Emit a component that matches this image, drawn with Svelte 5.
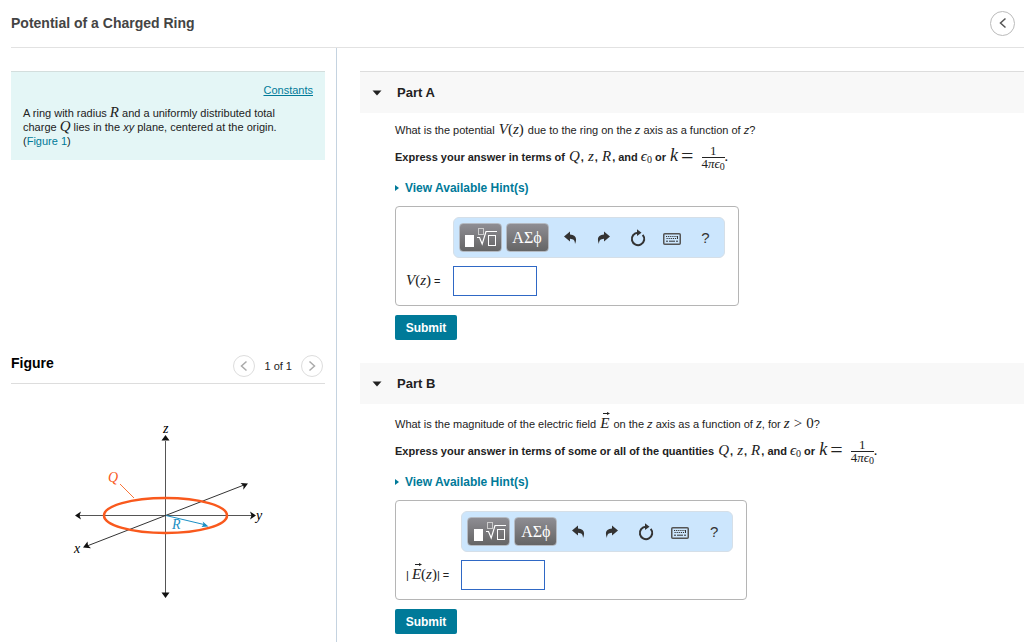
<script lang="ts">
	const parts = [
		{ id: "a", name: "Part A", given: "", label: "V" },
		{ id: "b", name: "Part B", given: "some or all of the quantities ", label: "E" },
	];

	let open = $state<Record<string, boolean>>({ a: true, b: true });
	let answers = $state<Record<string, string>>({ a: "", b: "" });
</script>

{#snippet chevron(dir: string)}
	<svg width="10" height="12" viewBox="0 0 10 12" fill="none" stroke="currentColor" aria-hidden="true">
		<path d={dir === "left" ? "M7.5 1.5 2.5 6l5 4.5" : "M2.5 1.5 7.5 6l-5 4.5"} stroke-width="1.5" />
	</svg>
{/snippet}

{#snippet vec()}
	<span class="vec"><i class="m">E</i><svg width="7" height="5" viewBox="0 0 7 5" aria-hidden="true"><path d="M0 2.500h5" stroke="#222" /><path d="M4 1 7 2.500 4 4z" fill="#222" /></svg></span>
{/snippet}

{#snippet toolbar()}
	<div class="toolbar">
		<button class="key" title="Templates">
			<svg width="34" height="22" viewBox="0 0 34 22" fill="none" stroke="#fff" aria-hidden="true">
				<rect x="2" y="8" width="9" height="12" fill="#fff" stroke="none" />
				<rect x="15.500" y="1.500" width="5" height="6" stroke="#ccc" />
				<path d="M14 10.500h2.500l2.700 6.500L23 4.500h11" stroke-width="1.200" />
				<rect x="25.500" y="8.500" width="7" height="10" />
			</svg>
		</button>
		<button class="key" title="Symbols">ΑΣϕ</button>
		<button class="tool" title="Undo">
			<svg width="14" height="14" viewBox="0 0 14 14" aria-hidden="true">
				<path d="M1 5.500 7 .5v3c5.500.2 7.500 4 5 9.500C12 9.500 10.500 8 7 7.800V10.500z" fill="#333" />
			</svg>
		</button>
		<button class="tool" title="Redo">
			<svg width="14" height="14" viewBox="0 0 14 14" aria-hidden="true">
				<path d="M13 5.500 7 .5v3C1.500 3.700-.5 7.500 2 13 2 9.500 3.500 8 7 7.800V10.500z" fill="#333" />
			</svg>
		</button>
		<button class="tool" title="Reset">
			<svg width="16" height="18" viewBox="0 0 16 18" aria-hidden="true">
				<path d="M8 3.700A6.200 6.200 0 1 0 12.700 5.800" fill="none" stroke="#333" stroke-width="2" />
				<path d="M7 .3 11.500 3.700 7 7z" fill="#333" />
			</svg>
		</button>
		<button class="tool" title="Keyboard shortcuts">
			<svg class="keyboard" width="18" height="12" viewBox="0 0 18 12" fill="none" stroke="#333" aria-hidden="true">
				<rect x=".75" y=".75" width="16.500" height="10.500" rx="1" stroke="#555" stroke-width="1.500" />
				<path d="M3 3.500h12M3.500 5.500h10" stroke-dasharray="1.200 .9" />
				<path d="M3 8.200h2M6 8.200h6M13 8.200h2M14.500 3v3" />
			</svg>
		</button>
		<button class="tool help" title="Help">?</button>
	</div>
{/snippet}

<div class="page">
	<header>
		<h1>Potential of a Charged Ring</h1>
		<button class="round dark" title="Collapse">{@render chevron("left")}</button>
	</header>

	<div class="columns">
		<aside>
			<section class="intro">
				<a class="constants" href="#constants">Constants</a>
				<p>
					A ring with radius <i class="m">R</i> and a uniformly distributed total charge <i class="m">Q</i> lies in the <em>xy</em> plane, centered at the origin. (<a href="#figure">Figure 1</a>)
				</p>
			</section>

			<section class="figure" id="figure">
				<div class="figure-head">
					<h2>Figure</h2>
					<div class="pager">
						<button class="round" title="Previous">{@render chevron("left")}</button>
						<span>1 of 1</span>
						<button class="round" title="Next">{@render chevron("right")}</button>
					</div>
				</div>
				<svg class="diagram" width="200" height="190" viewBox="0 -10 200 190" role="img" aria-label="Charged ring in the xy plane">
					<g stroke="#333" fill="none">
						<path d="M100.500 17V169M14 91.500H187" stroke="#555" />
						<path d="M22 122 179 61" />
					</g>
					<g fill="#111">
						<path d="M100.500 11l4 5.500h-8zM100.500 174l4-5.500h-8z" />
						<path d="M10 91.500l6-4-1.500 4 1.500 4zM191 91.500l-6-4 1.500 4-1.500 4z" />
						<path d="M18 123.500l4.500-6 .5 4 3 2.800zM183 59.500l-7.500-.5 3 2.800-.2 4z" />
					</g>
					<path d="M55 60 69 74" stroke="#f9753a" />
					<ellipse cx="100.500" cy="91.500" rx="61.500" ry="17.500" fill="none" stroke="#f9591d" stroke-width="2.500" />
					<path d="M101 91.500 141 101" stroke="#1c8fc4" fill="none" />
					<path d="M143.500 102.500l-7 .5 2-2.500-.8-3z" fill="#1c8fc4" />
					<text x="98" y="9">z</text>
					<text x="191" y="96">y</text>
					<text x="9" y="129">x</text>
					<text x="43" y="58" fill="#f9591d">Q</text>
					<text x="107" y="105" fill="#1c8fc4">R</text>
				</svg>
			</section>
		</aside>

		<main>
			{#each parts as part (part.id)}
				<section class="part">
					<h3>
						<button class="part-toggle" aria-expanded={open[part.id]} onclick={() => (open[part.id] = !open[part.id])}>
							<svg width="10" height="6" viewBox="0 0 10 6" aria-hidden="true"><path d="M.5 .5h9L5 5.500z" fill="#222" /></svg>
							{part.name}
						</button>
					</h3>
					{#if open[part.id]}
						<div class="body">
							{#if part.id === "a"}
								<p class="question">
									What is the potential <span class="m wide"><i>V</i>(<i>z</i>)</span> due to the ring on the <em>z</em> axis as a function of <em>z</em>?
								</p>
							{:else}
								<p class="question tall">
									What is the magnitude of the electric field <span class="wide">{@render vec()}</span> on the <em>z</em> axis as a function of <i class="m">z</i>, for <i class="m">z</i> <span class="m wide">&gt;</span> <span class="m">0</span>?
								</p>
							{/if}
							<p class="express">
								Express your answer in terms of {part.given}<i class="m wide">Q</i>, <i class="m wide">z</i>, <i class="m wide">R</i>, and <i class="m">ϵ</i><sub class="m">0</sub> or <i class="m k">k</i>
								<span class="m eq">=</span>
								<span class="frac m"><span>1</span><span>4<i>πϵ</i><sub>0</sub></span></span>.
							</p>
							<button class="hints">
								<svg width="4" height="6" viewBox="0 0 4 6" aria-hidden="true"><path d="M0 0v6l4-3z" fill="currentColor" /></svg>
								View Available Hint(s)
							</button>
							<form onsubmit={(e) => e.preventDefault()}>
								<div class="answer">
									{@render toolbar()}
									<label for="answer-{part.id}">
										{#if part.label === "V"}
											<span class="m"><i>V</i>(<i>z</i>)</span> =
										{:else}
											<span>|</span> {@render vec()}<span class="m">(<i>z</i>)</span>| =
										{/if}
									</label>
									<input id="answer-{part.id}" type="text" bind:value={answers[part.id]} />
								</div>
								<button class="submit">Submit</button>
							</form>
						</div>
					{/if}
				</section>
			{/each}
		</main>
	</div>
</div>

<style>
	:global(body) {
		margin: 0;
		background: #fff;
		color: #222;
		font: 11px/14px "Liberation Sans", Arial, sans-serif;
	}

	h1, h2, h3, p {
		margin: 0;
	}

	button {
		font-family: inherit;
		padding: 0;
		border: none;
		background: none;
		color: inherit;
		cursor: pointer;
	}

	a {
		color: #007a99;
		text-decoration: none;
	}

	.page {
		min-height: 100vh;
		display: flex;
		flex-direction: column;
	}

	header {
		display: flex;
		align-items: center;
		justify-content: space-between;
		height: 46px;
		margin-left: 11px;
		padding: 0 9px 1px 0;
		border-bottom: 1px solid #e2e2e2;
	}

	h1 {
		font-size: 14px;
		color: #444;
	}

	.round {
		width: 22px;
		height: 22px;
		box-sizing: border-box;
		display: flex;
		align-items: center;
		justify-content: center;
		border: 1px solid #ddd;
		border-radius: 50%;
		color: #aaa;
	}

	.round.dark {
		width: 25px;
		height: 25px;
		border-color: #bbb;
		color: #555;
	}

	.columns {
		flex: 1;
		display: flex;
	}

	aside {
		flex: none;
		width: 314px;
		padding: 23px 11px 0;
		border-right: 1px solid #c5d3e0;
	}

	.intro {
		padding: 11px 12px 12px;
		border-top: 1px solid #d3dedd;
		background: #e4f6f6;
	}

	.intro p {
		padding-right: 20px;
	}

	.constants {
		display: block;
		width: fit-content;
		margin: 0 0 9px auto;
		text-decoration: underline;
	}

	.m {
		font-family: "Liberation Serif", "Times New Roman", serif;
		font-size: 15px;
		line-height: 12px;
		font-weight: normal;
	}

	.wide {
		margin: 0 1px;
	}

	.figure {
		margin-top: 192px;
	}

	.figure-head {
		display: flex;
		align-items: center;
		justify-content: space-between;
		height: 31px;
		border-bottom: 1px solid #ddd;
	}

	h2 {
		height: 24px;
		font-size: 14px;
		color: #000;
	}

	.pager {
		display: flex;
		align-items: center;
		gap: 9px;
		padding: 0 2px 4px 0;
	}

	.diagram {
		display: block;
		margin: 30px auto 0 54px;
		font: italic 14px "Liberation Serif", serif;
	}

	main {
		flex: 1;
		min-width: 0;
		padding: 23px 0 0 23px;
	}

	.part {
		margin-bottom: 23px;
	}

	.part h3 {
		background: #f8f8f8;
	}

	.part:first-child h3 {
		border-top: 1px solid #ddd;
	}

	.part-toggle {
		display: flex;
		align-items: center;
		gap: 15px;
		width: 100%;
		height: 41px;
		padding-left: 12px;
		font-size: 13px;
		font-weight: bold;
	}

	.body {
		padding: 8px 20px 0 35px;
	}

	.question {
		line-height: 18px;
	}

	.tall {
		padding-top: 3px;
	}

	.express {
		height: 28px;
		margin-top: 4px;
		line-height: 28px;
		font-weight: bold;
	}

	sub {
		vertical-align: -2px;
	}

	sub.m {
		font-size: 10px;
	}

	.k {
		margin-left: 1px;
		font-size: 18px;
	}

	.eq {
		margin-right: 3px;
		font-size: 22px;
		vertical-align: -2px;
	}

	.frac {
		display: inline-flex;
		flex-direction: column;
		margin-left: 2px;
		vertical-align: middle;
		text-align: center;
		font-size: 13px;
		line-height: 12px;
	}

	.frac span:first-child {
		border-bottom: 1px solid #222;
	}

	.frac sub {
		font-size: 10px;
		line-height: 8px;
	}

	.vec {
		position: relative;
	}

	.vec svg {
		position: absolute;
		left: 3px;
		top: -7px;
	}

	.hints {
		display: flex;
		align-items: center;
		gap: 6px;
		margin-top: 10px;
		font-size: 12px;
		line-height: 14px;
		font-weight: bold;
		color: #007a99;
	}

	.answer {
		display: inline-grid;
		grid-template-columns: auto 272px;
		column-gap: 12px;
		row-gap: 8px;
		align-items: center;
		margin-top: 11px;
		padding: 10px 13px 9px 10px;
		border: 1px solid #b5b5b5;
		border-radius: 4px;
		vertical-align: top;
	}

	.toolbar {
		grid-column: 2;
		box-sizing: border-box;
		height: 41px;
		display: flex;
		align-items: center;
		padding-left: 5px;
		border: 1px solid #d5dfe8;
		border-radius: 6px;
		background: #cce6fd;
	}

	.key {
		width: 43px;
		height: 29px;
		margin-right: 4px;
		display: flex;
		align-items: center;
		justify-content: center;
		border: 1px solid #b4bac2;
		border-radius: 4px;
		background: linear-gradient(#8e8d93, #656565);
		color: #fff;
		font: 16px "Liberation Serif", serif;
	}

	.tool {
		width: 34px;
		height: 29px;
		display: flex;
		align-items: center;
		justify-content: center;
	}

	.keyboard {
		padding-top: 3px;
	}

	.help {
		font-size: 15px;
		color: #333;
	}

	label {
		white-space: nowrap;
	}

	input {
		width: 84px;
		height: 30px;
		box-sizing: border-box;
		border: 1px solid #2f68c5;
		background: #fff;
	}

	.submit {
		display: block;
		width: 62px;
		height: 25px;
		margin-top: 9px;
		border-radius: 2px;
		background: #007a99;
		color: #fff;
		font-size: 12px;
		font-weight: bold;
	}
</style>
